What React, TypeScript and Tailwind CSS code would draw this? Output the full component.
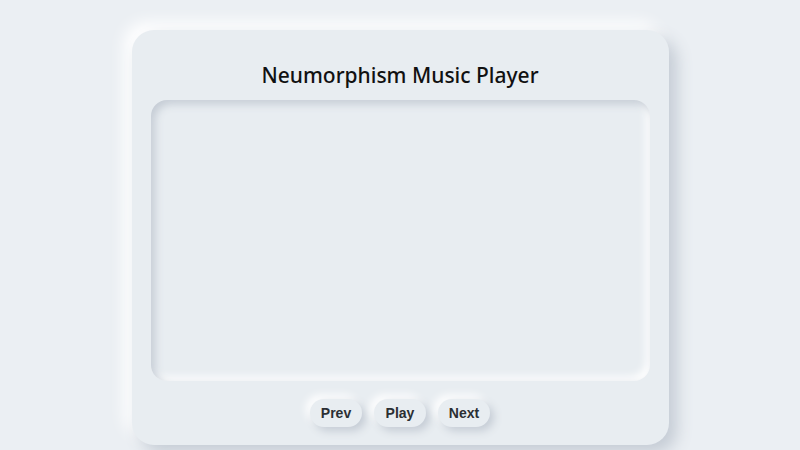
import React from 'react';

const buttons = ['Prev', 'Play', 'Next'];

export default function App() {
  return (
    <div className="w-full h-[450px] overflow-hidden bg-[#ebeff3] flex justify-center pt-[30px]">
      <div className="w-[537px] h-[415px] rounded-[22px] bg-[#e8edf1] shadow-[8px_8px_16px_#c5ccd5,-8px_-8px_16px_#ffffff] px-[19px] pt-[29px] pb-[18px] flex flex-col">
        <h1 className="text-center text-[21px] leading-[32px] text-[#111] font-['Noto_Sans',sans-serif] font-medium">
          Neumorphism Music Player
        </h1>
        <div className="mt-[9px] h-[281px] rounded-[16px] bg-[#e8edf1] shadow-[inset_4px_4px_8px_#c5ccd5,inset_-4px_-4px_8px_#ffffff]" />
        <div className="mt-[18px] flex justify-center gap-[12px]">
          {buttons.map((b) => (
            <button
              key={b}
              className="w-[52px] h-[28px] rounded-full bg-[#e8edf1] shadow-[4px_4px_8px_#c5ccd5,-4px_-4px_8px_#ffffff] text-[14px] font-bold text-[#2b2f33] font-['Liberation_Sans',Arial,sans-serif]"
            >
              {b}
            </button>
          ))}
        </div>
      </div>
    </div>
  );
}
